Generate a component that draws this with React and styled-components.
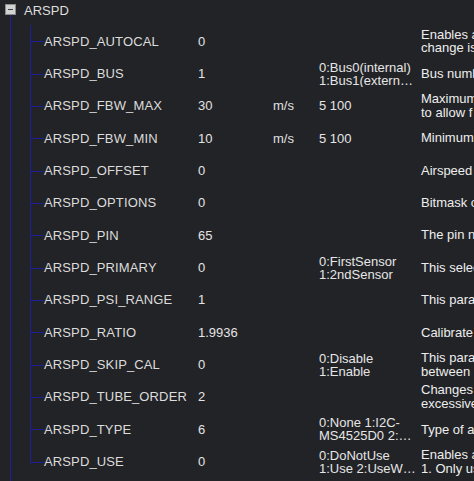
import React from "react";
import styled, { createGlobalStyle } from "styled-components";

const GlobalStyle = createGlobalStyle`
  html, body {
    margin: 0;
    padding: 0;
    background: #222326;
    overflow: hidden;
  }
  body {
    font-family: "Liberation Sans", Arial, sans-serif;
    font-size: 13px;
    color: #e2e2e2;
  }
`;

const TREE_LINE = "#1e1e96";

const Tree = styled.div`
  width: 474px;
  height: 481px;
  overflow: hidden;
  white-space: nowrap;
`;

const Header = styled.div`
  display: flex;
  align-items: flex-start;
  height: 15px;
  padding-left: 5px;
`;

const ToggleBox = styled.span`
  box-sizing: border-box;
  width: 11px;
  height: 11px;
  margin-top: 4px;
  background: #d2d2d2;
  border: 1px solid #8c8c8c;
  display: flex;
  align-items: center;
  justify-content: center;

  &::after {
    content: "";
    width: 5px;
    height: 1px;
    background: #404040;
  }
`;

const HeaderLabel = styled.span`
  margin-left: 8px;
  padding-top: 3px;
  line-height: 15px;
  color: #dedede;
`;

const Branch = styled.div`
  margin-left: 10px;
  border-left: 1px solid ${TREE_LINE};
  padding-top: 10px;
  height: 481px;
`;

const Children = styled.div`
  margin-left: 19px;
`;

const Row = styled.div`
  display: grid;
  grid-template-columns: 14px 154px 75px 46px 102px 1fr;
  align-items: center;
  height: 32.35px;
`;

const Connector = styled.span`
  position: relative;
  align-self: stretch;

  &::before {
    content: "";
    position: absolute;
    left: 0;
    top: 0;
    height: ${({ $last }) => ($last ? "50%" : "100%")};
    border-left: 1px solid ${TREE_LINE};
  }

  &::after {
    content: "";
    position: absolute;
    left: 0;
    right: 0;
    top: 50%;
    border-top: 1px solid ${TREE_LINE};
  }
`;

const Name = styled.span`
  color: #dcdcdc;
  letter-spacing: 0.01em;
`;

const Value = styled.span`
  color: #e4e4e4;
`;

const Unit = styled.span`
  color: #e0e0e0;
`;

const Options = styled.span`
  color: #e6e6e6;
  font-size: 13px;
  line-height: 13px;
  white-space: pre;
  overflow: hidden;
`;

const Description = styled.span`
  color: #eeeeee;
  line-height: 13.5px;
  white-space: pre;
`;

const params = [
  { name: "ARSPD_AUTOCAL", value: "0", desc: "Enables automatic airspeed ratio calibration\nchange is" },
  { name: "ARSPD_BUS", value: "1", opts: "0:Bus0(internal)\n1:Bus1(extern…", desc: "Bus number" },
  { name: "ARSPD_FBW_MAX", value: "30", unit: "m/s", opts: "5 100", desc: "Maximum airspeed\nto allow f" },
  { name: "ARSPD_FBW_MIN", value: "10", unit: "m/s", opts: "5 100", desc: "Minimum airspeed" },
  { name: "ARSPD_OFFSET", value: "0", desc: "Airspeed offset" },
  { name: "ARSPD_OPTIONS", value: "0", desc: "Bitmask of options" },
  { name: "ARSPD_PIN", value: "65", desc: "The pin number" },
  { name: "ARSPD_PRIMARY", value: "0", opts: "0:FirstSensor\n1:2ndSensor", desc: "This selects" },
  { name: "ARSPD_PSI_RANGE", value: "1", desc: "This parameter" },
  { name: "ARSPD_RATIO", value: "1.9936", desc: "Calibrate" },
  { name: "ARSPD_SKIP_CAL", value: "0", opts: "0:Disable\n1:Enable", desc: "This parameter\nbetween" },
  { name: "ARSPD_TUBE_ORDER", value: "2", desc: "Changes the\nexcessive" },
  { name: "ARSPD_TYPE", value: "6", opts: "0:None 1:I2C-\nMS4525D0 2:…", desc: "Type of airspeed" },
  { name: "ARSPD_USE", value: "0", opts: "0:DoNotUse\n1:Use 2:UseW…", desc: "Enables airspeed\n1. Only use" },
];

export default function App() {
  return (
    <Tree>
      <GlobalStyle />
      <Header>
        <ToggleBox />
        <HeaderLabel>ARSPD</HeaderLabel>
      </Header>
      <Branch>
        <Children>
          {params.map((p, i) => (
            <Row key={p.name}>
              <Connector $last={i === params.length - 1} />
              <Name>{p.name}</Name>
              <Value>{p.value}</Value>
              <Unit>{p.unit || ""}</Unit>
              <Options>{p.opts || ""}</Options>
              <Description>{p.desc}</Description>
            </Row>
          ))}
        </Children>
      </Branch>
    </Tree>
  );
}
